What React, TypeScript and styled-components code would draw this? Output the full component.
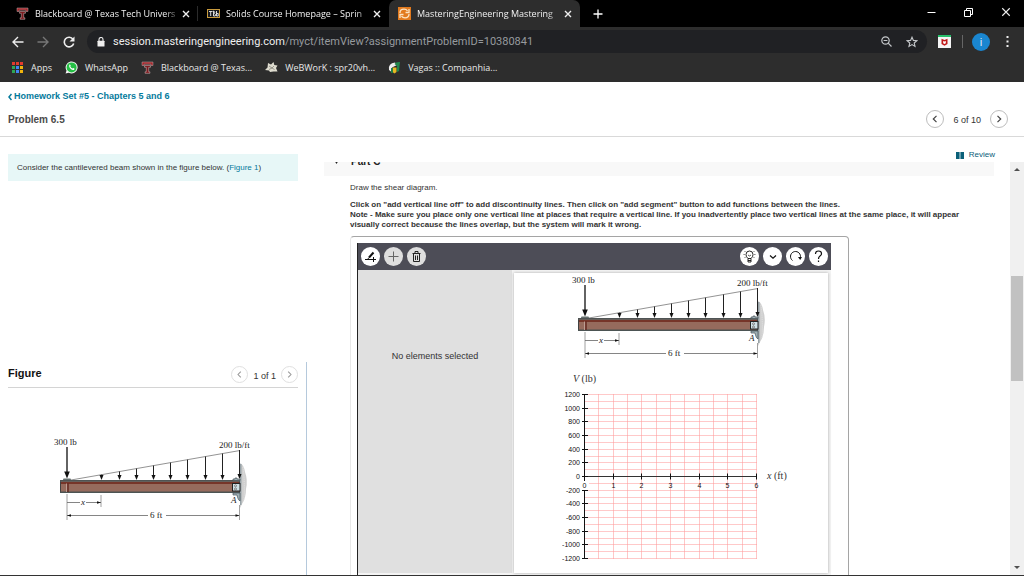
import React from 'react';
import styled, { createGlobalStyle } from 'styled-components';

const GlobalStyle = createGlobalStyle`
  * { box-sizing: border-box; }
  body { margin: 0; background: #fff; font-family: "Liberation Sans", Arial, sans-serif; color: #333; }
  button { font: inherit; color: inherit; background: none; border: 0; padding: 0; margin: 0; display: flex; align-items: center; justify-content: center; }
  a { text-decoration: none; color: inherit; }
  svg { display: block; flex: none; }
  h1, h2, p { margin: 0; }
`;

const uiFont = '"Open Sans", "Noto Sans", sans-serif';
const teal = '#047a9c';

/* ---------- window frame ---------- */
const Window = styled.div`
  height: 100vh;
  display: flex;
  flex-direction: column;
  overflow: hidden;
  border-bottom: 1px solid #333;
`;
const TabStrip = styled.div`
  display: flex;
  height: 27px;
  flex: none;
  background: #000;
  padding-left: 7px;
  font: 9px/27px ${uiFont};
  color: #f1f1f1;
`;
const Tab = styled.div<{ $active?: boolean }>`
  flex: 0 1 191px;
  min-width: 0;
  display: flex;
  align-items: center;
  gap: 6px;
  padding: 0 8px 0 9px;
  border-radius: 7px 7px 0 0;
  background: ${(p) => (p.$active ? '#2d2d2d' : 'transparent')};
`;
const TabTitle = styled.span`
  flex: 1;
  min-width: 0;
  white-space: nowrap;
  mask-image: linear-gradient(to right, #000 92%, rgba(0, 0, 0, 0.3));
`;
const TabDivider = styled.span`
  width: 1px;
  height: 15px;
  margin: 6px 0 0 -1px;
  background: #2b2b2b;
`;
const NewTab = styled.button`
  width: 36px;
`;
const WindowButtons = styled.div`
  margin-left: auto;
  display: flex;
  height: 24px;
`;
const WindowButton = styled.button`
  width: 37px;
`;
const Toolbar = styled.div`
  display: flex;
  align-items: center;
  height: 29px;
  flex: none;
  background: #2d2d2d;
  padding-left: 5px;
`;
const ToolButton = styled.button<{ $width: number }>`
  width: ${(p) => p.$width}px;
  height: 23px;
  flex: none;
`;
const AddressBar = styled.div`
  flex: 1;
  min-width: 0;
  display: flex;
  align-items: center;
  height: 23px;
  margin-left: 5px;
  padding: 0 2px 0 10px;
  border-radius: 12px;
  background: #202124;
  color: #969a9e;
  font: 11px/23px Roboto, ${uiFont};
`;
const Url = styled.span`
  flex: 1;
  min-width: 0;
  margin-left: 8px;
  white-space: nowrap;
  overflow: hidden;
`;
const Host = styled.span`
  color: #eeeeee;
`;
const ToolDivider = styled.span`
  width: 1px;
  height: 13px;
  margin-right: 9px;
  background: #666;
`;
const Avatar = styled.button`
  width: 18px;
  height: 18px;
  flex: none;
  border-radius: 50%;
  background: #1a86d0;
  color: #fff;
  font: 10px/18px ${uiFont};
`;
const Bookmarks = styled.nav`
  display: flex;
  align-items: center;
  gap: 13px;
  height: 26px;
  flex: none;
  padding: 0 12px 3px;
  background: #2d2d2d;
  font: 9px/22px ${uiFont};
  color: #e8e8e8;
`;
const Bookmark = styled.a`
  display: flex;
  align-items: center;
  gap: 7px;
  white-space: nowrap;
`;

/* ---------- assignment page ---------- */
const Header = styled.header`
  display: flex;
  justify-content: space-between;
  align-items: flex-end;
  flex: none;
  padding: 8px 16px 7px 8px;
  border-bottom: 1px solid #d9d9d9;
`;
const BackLink = styled.a`
  display: flex;
  align-items: center;
  gap: 2px;
  color: ${teal};
  font-weight: bold;
  font-size: 9px;
  line-height: 13px;
`;
const ProblemTitle = styled.h1`
  margin: 9px 0 2px;
  font-size: 10px;
  line-height: 15px;
  color: #4a4a4a;
`;
const Pager = styled.div<{ $muted?: boolean }>`
  display: flex;
  align-items: center;
  gap: ${(p) => (p.$muted ? 5 : 9)}px;
  font-size: 9px;
  line-height: 18px;
  color: #333;
  span { padding-top: 2px; }
  button {
    width: ${(p) => (p.$muted ? 17 : 18)}px;
    height: ${(p) => (p.$muted ? 17 : 18)}px;
    border: 1px solid ${(p) => (p.$muted ? '#e0e0e0' : '#bdbdbd')};
    border-radius: 50%;
    color: ${(p) => (p.$muted ? '#999' : '#444')};
  }
`;
const Body = styled.div`
  flex: 1;
  min-height: 0;
  display: grid;
  grid-template-columns: 307px minmax(0, 1fr);
`;
const Side = styled.aside`
  display: flex;
  flex-direction: column;
  justify-content: space-between;
  min-height: 0;
`;
const Prompt = styled.p`
  margin: 17px 9px 0 8px;
  padding: 7px 9px;
  background: #e7f7f7;
  font-size: 8px;
  line-height: 13px;
  white-space: nowrap;
  a { color: ${teal}; }
`;
const FigurePane = styled.section`
  border-right: 1px solid #b5c9dc;
  padding: 0 8px 50px;
`;
const FigureHead = styled.div`
  display: flex;
  justify-content: space-between;
  align-items: center;
  height: 26px;
  border-bottom: 1px solid #d4d4d4;
  h2 { font-size: 11px; line-height: 16px; color: #111; padding-bottom: 3px; }
`;
const FigureArt = styled.div`
  padding: 47px 0 0 42px;
`;
const Main = styled.main`
  display: flex;
  flex-direction: column;
  min-height: 0;
`;
const ReviewRow = styled.div`
  display: flex;
  justify-content: flex-end;
  flex: none;
  padding: 12px 29px 0 0;
  height: 25px;
`;
const ReviewLink = styled.a`
  display: flex;
  align-items: center;
  gap: 5px;
  height: 12px;
  color: #0b6079;
  font-size: 8px;
  line-height: 12px;
`;
const Scroller = styled.div`
  flex: 1;
  min-height: 0;
  display: flex;
`;
const ScrollContent = styled.div`
  flex: 1;
  min-width: 0;
  overflow: hidden;
  padding: 0 16px 0 17px;
`;
const ScrollTrack = styled.div`
  width: 14px;
  flex: none;
  display: flex;
  flex-direction: column;
  background: #f0f0f0;
`;
const ScrollThumb = styled.div`
  height: 105px;
  margin: 99px 1px auto 1px;
  background: #c1c1c1;
`;
const ScrollButton = styled.button`
  height: 15px;
  flex: none;
`;
const PartBar = styled.div`
  display: flex;
  align-items: center;
  gap: 12px;
  height: 28px;
  margin-top: -14px;
  padding-left: 10px;
  background: #f8f8f8;
  h2 { font-size: 10px; line-height: 28px; color: #222; }
`;
const PartContent = styled.div`
  padding: 7px 0 0 26px;
`;
const Instruction = styled.p`
  font-size: 8px;
  line-height: 10px;
`;
const Note = styled.p`
  margin-top: 7px;
  padding-right: 8px;
  font-weight: bold;
  font-size: 8px;
  line-height: 10px;
`;
const Applet = styled.div`
  width: 499px;
  max-width: 100%;
  margin-top: 6px;
  padding: 6px 17px 17px 6px;
  border: 1px solid #a5a5a5;
  border-left-color: #e8e8e8;
  border-radius: 4px;
`;
const AppletFrame = styled.div`
  padding-bottom: 6px;
  border-left: 1px solid #222;
  background: #f4f4f4;
`;
const AppletBar = styled.div`
  display: flex;
  justify-content: space-between;
  padding: 4px 3px;
  background: #4d4d57;
`;
const ButtonGroup = styled.div`
  display: flex;
  gap: 4px;
`;
const RoundButton = styled.button<{ $dim?: boolean }>`
  width: 19px;
  height: 19px;
  border-radius: 50%;
  background: ${(p) => (p.$dim ? '#dedede' : '#fff')};
  color: #111;
`;
const AppletBody = styled.div`
  display: grid;
  grid-template-columns: 154px minmax(0, 1fr);
  column-gap: 2px;
`;
const Inspector = styled.div`
  background: #e0e0e0;
  padding-top: 80px;
  text-align: center;
  font-size: 9px;
  line-height: 12px;
`;
const Canvas = styled.div`
  margin: 3px 3px 0 0;
  padding: 0 0 10px 48px;
  background: #fff;
  box-shadow: 0 0 3px #aaa;
`;
const CanvasFigure = styled.div`
  padding-left: 6px;
`;

/* ---------- drawings ---------- */
const Chevron = ({ dir, size = 8 }: { dir: 'left' | 'right' | 'down'; size?: number }) => (
  <svg width={size} height={size} viewBox="0 0 8 8" fill="none" stroke="currentColor" strokeWidth="1.2">
    <path d={{ left: 'M5.5 .8 2.3 4l3.2 3.2', right: 'M2.5 .8 5.7 4 2.5 7.2', down: 'M1 2.5 4 5.3l3-2.8' }[dir]} />
  </svg>
);

const Cross = ({ size = 8, weight = 1.4 }: { size?: number; weight?: number }) => (
  <svg width={size} height={size} viewBox="0 0 8 8" stroke="#eee" strokeWidth={weight}>
    <path d="M1 1l6 6M7 1 1 7" />
  </svg>
);

const TechLogo = () => (
  <svg width="13" height="13" viewBox="0 0 13 13">
    <path d="M1 1h11v3.500h-2V3.200H3v1.300H1z" fill="#a3262b" stroke="#b9a9a9" strokeWidth=".5" />
    <path d="M3.500 4.500h6v1.800H7.700v4.500h1.200v1.500H4.100v-1.500h1.200V6.300H3.500z" fill="#7d1a1e" stroke="#d8c4c4" strokeWidth=".5" />
  </svg>
);

const CourseLogo = () => (
  <svg width="13" height="13" viewBox="0 0 13 13">
    <rect x=".5" y="2.500" width="12" height="8" fill="#15181e" stroke="#c99b3d" />
    <path d="M2 4.500h3.500M3.700 4.500v4.500M6.500 4v5h1.700q1.200-1.200-.8-2.500 1.500-1.200-.9-2.500M9.500 4v5M9.500 6.500h1.700v2.500H9.500" stroke="#eee" strokeWidth=".9" fill="none" />
  </svg>
);

const MasteringLogo = () => (
  <svg width="13" height="13" viewBox="0 0 13 13">
    <rect width="13" height="13" fill="#e27a1e" />
    <path d="M2 6q0-3.800 4-3.800 2.300 0 3.500 1.600M11 2v3.500H7.500M11 7q0 3.800-4 3.800-2.300 0-3.500-1.600M2 11V7.500h3.500" fill="none" stroke="#fbe3c4" strokeWidth="1.3" />
  </svg>
);

const AppsIcon = () => (
  <svg width="12" height="12" viewBox="0 0 12 12">
    {['#e33b2e', '#e33b2e', '#e33b2e', '#2fa653', '#4285f4', '#f2b50c', '#2fa653', '#4285f4', '#f2b50c'].map((c, i) => (
      <rect key={i} x={(i % 3) * 4} y={Math.floor(i / 3) * 4} width="3" height="3" fill={c} />
    ))}
  </svg>
);

const WhatsAppIcon = () => (
  <svg width="13" height="13" viewBox="0 0 13 13">
    <path d="M.6 12.500 1.500 9.500A6 6 0 1 1 3.800 11.700z" fill="#f4f4f4" />
    <circle cx="6.600" cy="6.400" r="5" fill="#25c045" />
    <path d="M4.200 3.800q1-1 1.500.9l-.4.8q.7 1.500 2.200 2.100l.8-.6q2 .5 1 1.500-1.200 1.200-3.500-.4T4.200 3.800z" fill="#fff" />
  </svg>
);

const WebworkIcon = () => (
  <svg width="13" height="13" viewBox="0 0 13 13">
    <path d="M3 2l3 1.500L8.500 1l.8 3 3.200.5-1.500 2.500 1.500 3.500H8.500L5 11 4 9.500 0 9l2.500-2.500z" fill="#dedccf" />
    <path d="M4 5l3 2 2-2M4 8.500l3-1.500 2.500 1.500" fill="none" stroke="#77766b" strokeWidth=".7" />
  </svg>
);

const VagasIcon = () => (
  <svg width="13" height="13" viewBox="0 0 13 13">
    <path d="M1 9Q0 2 7 1.500L9 4 4 6.500 3.500 11z" fill="#eee" />
    <path d="M6.500 3Q8 .5 12 1l-.5 4L11 10l-2 1V5z" fill="#21864a" />
    <path d="M4.500 6.500h4V11l-2 1.500-2-1.500z" fill="#e6b822" />
    <path d="M3 7h1.800v5H3z" fill="#198147" />
  </svg>
);

const ShieldIcon = () => (
  <svg width="13" height="13" viewBox="0 0 13 13">
    <rect width="13" height="13" fill="#f5f5f5" />
    <rect width="13" height="2" fill="#27c06a" />
    <path d="M3.500 3.700l3 1.300 3-1.300v5.300l-3 1.800-3-1.800z" fill="#c01818" />
    <path d="M5.200 6l1.300.6 1.300-.6v2.200l-1.300.7-1.300-.7z" fill="#fff" />
  </svg>
);

const loadArrow = (x: number, y1: number, y2: number, w = 2) => (
  <g key={x}>
    <path d={`M${x} ${y1}V${y2 - 3}`} stroke="#222" strokeWidth={w > 2 ? 1.4 : 1} />
    <path d={`M${x - w} ${y2 - w * 2.3}h${w * 2}L${x} ${y2 + 0.5}z`} fill="#111" />
  </g>
);

const BeamText = styled.text<{ $italic?: boolean }>`
  font: 9px "Liberation Serif", "Times New Roman", serif;
  font-style: ${(p) => (p.$italic ? 'italic' : 'normal')};
  fill: #222;
`;

const loadXs = [51.5, 69.5, 86.5, 103.5, 120.5, 137.5, 155.5, 172.5];

const BeamDrawing = () => (
  <svg width="205" height="90" viewBox="0 0 205 90">
    <path d="M190 28q4 2 5 9 3 8 1 17 0 9-4 15l-2 4z" fill="#cfcfcf" />
    <path d="M193 32q2 14 1 34" stroke="#e6e6e6" strokeWidth="1" strokeDasharray="1 1" fill="none" />
    <rect x="190" y="29" width="1.500" height="41" fill="#98a3a8" />
    <BeamText x="4" y="10">300 lb</BeamText>
    <BeamText x="169" y="13">200 lb/ft</BeamText>
    {loadArrow(17, 12, 43, 2.8)}
    <path d="M21 45 190 15.500" stroke="#777" strokeWidth=".8" />
    {loadXs.map((x) => loadArrow(x, 45 - (x - 21) * 0.1745, 44.5))}
    {loadArrow(189.5, 15, 43.5)}
    <rect x="13" y="43.500" width="8" height="2" rx="1" fill="#66706f" />
    <rect x="10.500" y="45.500" width="179" height="12" fill="#966b5d" stroke="#414141" />
    <path d="M10 46h180" stroke="#555b5b" strokeWidth="1.500" />
    <path d="M11 48h178" stroke="#6b2318" strokeWidth="1.400" />
    <path d="M10 57.300h180" stroke="#4c5453" strokeWidth="1.400" />
    <path d="M16.500 48.500v8.500" stroke="#c7aaa0" strokeWidth=".8" />
    <path d="M18 48.500v8.500" stroke="#5e2018" strokeWidth="1.300" />
    <rect x="182.500" y="48.500" width="7.500" height="7.500" fill="#cfe0e6" stroke="#222" />
    <circle cx="185.500" cy="50.800" r="1" fill="#eee" stroke="#444" strokeWidth=".6" />
    <circle cx="185.500" cy="54" r="1" fill="#eee" stroke="#444" strokeWidth=".6" />
    <path d="M183 45.500v-1.500h2v-1h2v1h3v1.500zM183 58h7v8q-2-1-2.500-4l-.5-2h-4z" fill="#9fb0b5" stroke="#47545a" strokeWidth=".7" />
    <BeamText x="181" y="68" $italic>A</BeamText>
    <path d="M17 59v26M51 60v12M189.500 70v15" stroke="#888" strokeWidth=".8" />
    <path d="M17 67.500h13M36 67.500h15M17 80.500h81M116 80.500h73" stroke="#666" strokeWidth=".8" />
    <path d="M51 67.500l-4-1.300v2.600zM17 80.500l4-1.300v2.600zM189.500 80.500l-4-1.300v2.600z" fill="#111" />
    <BeamText x="31" y="70" $italic>x</BeamText>
    <BeamText x="100" y="83">6 ft</BeamText>
  </svg>
);

const ChartWrap = styled.svg`
  margin-top: 10px;
`;
const TickText = styled.text`
  font: 7px "Liberation Sans", Arial, sans-serif;
  fill: #111;
`;
const AxisText = styled.text`
  font: 10px "Liberation Serif", "Times New Roman", serif;
  fill: #333;
`;

const yTicks = [1200, 1000, 800, 600, 400, 200, 0, -200, -400, -600, -800, -1000, -1200];
const yAt = (v: number) => Math.round(103 - (v / 1200) * 82) + 0.5;
const xAt = (v: number) => Math.round(22 + (v / 6) * 172) + 0.5;

const ShearChart = () => (
  <ChartWrap width="240" height="190" viewBox="0 0 240 190">
    <AxisText x="11" y="9"><tspan fontStyle="italic">V</tspan> (lb)</AxisText>
    {Array.from({ length: 25 }, (_, i) => (
      <path key={i} d={`M22 ${yAt(1200 - i * 100)}H195`} stroke="#ffc9c9" />
    ))}
    {Array.from({ length: 12 }, (_, i) => (
      <path key={i} d={`M${xAt((i + 1) / 2)} 21V186`} stroke="#f99" strokeOpacity=".55" />
    ))}
    <path d="M22.500 21V186" stroke="#111" />
    <path d={`M22 ${yAt(0)}H195`} stroke="#333" />
    {yTicks.map((v) => (
      <g key={v}>
        <path d={`M20 ${yAt(v)}h6`} stroke="#111" />
        <TickText x="18" y={yAt(v) + 2.5} textAnchor="end">{v}</TickText>
      </g>
    ))}
    <rect x="19" y="108" width="8" height="9" fill="#fff" />
    {[0, 1, 2, 3, 4, 5, 6].map((v) => (
      <g key={v}>
        <path d={`M${xAt(v)} ${yAt(0) - 3}v6`} stroke="#111" />
        <TickText x={xAt(v)} y="115" textAnchor="middle">{v}</TickText>
      </g>
    ))}
    <AxisText x="205" y="106"><tspan fontStyle="italic">x</tspan> (ft)</AxisText>
  </ChartWrap>
);

export default function App() {
  return (
    <Window>
      <GlobalStyle />
      <TabStrip>
        <Tab>
          <TechLogo />
          <TabTitle>Blackboard @ Texas Tech Univers</TabTitle>
          <button aria-label="Close tab"><Cross /></button>
        </Tab>
        <TabDivider />
        <Tab>
          <CourseLogo />
          <TabTitle>Solids Course Homepage – Sprin</TabTitle>
          <button aria-label="Close tab"><Cross /></button>
        </Tab>
        <Tab $active>
          <MasteringLogo />
          <TabTitle>MasteringEngineering Mastering</TabTitle>
          <button aria-label="Close tab"><Cross /></button>
        </Tab>
        <NewTab aria-label="New tab">
          <svg width="10" height="10" viewBox="0 0 10 10" stroke="#fff" strokeWidth="1.300"><path d="M5 .5v9M.5 5h9" /></svg>
        </NewTab>
        <WindowButtons>
          <WindowButton aria-label="Minimize">
            <svg width="9" height="9" viewBox="0 0 9 9" stroke="#fff"><path d="M.5 4.500h8" /></svg>
          </WindowButton>
          <WindowButton aria-label="Restore">
            <svg width="9" height="9" viewBox="0 0 9 9" stroke="#fff" fill="none"><path d="M.5 2.500h6v6h-6zM2.500 2.500v-2h6v6h-2" /></svg>
          </WindowButton>
          <WindowButton aria-label="Close"><Cross size={10} weight={0.9} /></WindowButton>
        </WindowButtons>
      </TabStrip>

      <Toolbar>
        <ToolButton $width={25} aria-label="Back">
          <svg width="12" height="12" viewBox="0 0 12 12" fill="none" stroke="#eee" strokeWidth="1.400"><path d="M11.500 6H1M6 1 1 6l5 5" /></svg>
        </ToolButton>
        <ToolButton $width={26} aria-label="Forward">
          <svg width="12" height="12" viewBox="0 0 12 12" fill="none" stroke="#777" strokeWidth="1.400"><path d="M.5 6H11M6 1l5 5-5 5" /></svg>
        </ToolButton>
        <ToolButton $width={26} aria-label="Reload">
          <svg width="12" height="12" viewBox="0 0 12 12"><path d="M10 3.200A4.800 4.800 0 1 0 10.700 7.500" fill="none" stroke="#eee" strokeWidth="1.600" /><path d="M11.500.5v5h-5z" fill="#eee" /></svg>
        </ToolButton>
        <AddressBar>
          <svg width="8" height="10" viewBox="0 0 8 10"><rect x=".5" y="3.700" width="7" height="5.800" rx=".6" fill="#eee" /><path d="M2 4V2.500a2 2 0 0 1 4 0V4" fill="none" stroke="#eee" strokeWidth="1.100" /></svg>
          <Url><Host>session.masteringengineering.com</Host>/myct/itemView?assignmentProblemID=10380841</Url>
          <ToolButton $width={26} aria-label="Zoom">
            <svg width="11" height="11" viewBox="0 0 11 11" fill="none" stroke="#c4c7ca" strokeWidth="1.200"><circle cx="4.500" cy="4.500" r="3.700" /><path d="M7.200 7.200l3.300 3.300M2.600 4.500h3.800" /></svg>
          </ToolButton>
          <ToolButton $width={26} aria-label="Bookmark this page">
            <svg width="12" height="12" viewBox="0 0 12 12" fill="none" stroke="#c4c7ca" strokeWidth="1.100"><path d="M6 1.200l1.400 3.200 3.500.3-2.700 2.300.8 3.400-3-1.800-3 1.800.8-3.400L1.100 4.700l3.500-.3z" /></svg>
          </ToolButton>
        </AddressBar>
        <ToolButton $width={35} aria-label="Extension"><ShieldIcon /></ToolButton>
        <ToolDivider />
        <Avatar aria-label="Profile">i</Avatar>
        <ToolButton $width={34} aria-label="Menu">
          <svg width="3" height="11" viewBox="0 0 3 11" fill="#eee"><path d="M.5 0h2v2h-2zM.5 4.500h2v2h-2zM.5 9h2v2h-2z" /></svg>
        </ToolButton>
      </Toolbar>

      <Bookmarks>
        <Bookmark href="#"><AppsIcon />Apps</Bookmark>
        <Bookmark href="#"><WhatsAppIcon />WhatsApp</Bookmark>
        <Bookmark href="#"><TechLogo />Blackboard @ Texas...</Bookmark>
        <Bookmark href="#"><WebworkIcon />WeBWorK : spr20vh...</Bookmark>
        <Bookmark href="#"><VagasIcon />Vagas :: Companhia...</Bookmark>
      </Bookmarks>

      <Header>
        <div>
          <BackLink href="#">
            <svg width="4" height="8" viewBox="0 0 4 8" fill="none" stroke="currentColor" strokeWidth="1.500"><path d="M3.500 1 1 4l2.500 3" /></svg>
            Homework Set #5 - Chapters 5 and 6
          </BackLink>
          <ProblemTitle>Problem 6.5</ProblemTitle>
        </div>
        <Pager>
          <button aria-label="Previous problem"><Chevron dir="left" /></button>
          <span>6 of 10</span>
          <button aria-label="Next problem"><Chevron dir="right" /></button>
        </Pager>
      </Header>

      <Body>
        <Side>
          <Prompt>Consider the cantilevered beam shown in the figure below. (<a href="#figure">Figure 1</a>)</Prompt>
          <FigurePane id="figure">
            <FigureHead>
              <h2>Figure</h2>
              <Pager $muted>
                <button aria-label="Previous figure"><Chevron dir="left" size={7} /></button>
                <span>1 of 1</span>
                <button aria-label="Next figure"><Chevron dir="right" size={7} /></button>
              </Pager>
            </FigureHead>
            <FigureArt><BeamDrawing /></FigureArt>
          </FigurePane>
        </Side>

        <Main>
          <ReviewRow>
            <ReviewLink href="#">
              <svg width="8" height="7" viewBox="0 0 8 7" fill="#0b6079"><path d="M0 0h3.600v7H0zM4.400 0H8v7H4.400z" /></svg>
              Review
            </ReviewLink>
          </ReviewRow>
          <Scroller>
            <ScrollContent>
              <PartBar>
                <svg width="5" height="4" viewBox="0 0 5 4" fill="#222"><path d="M0 0h5L2.500 4z" /></svg>
                <h2>Part C</h2>
              </PartBar>
              <PartContent>
                <Instruction>Draw the shear diagram.</Instruction>
                <Note>
                  Click on "add vertical line off" to add discontinuity lines. Then click on "add segment" button to add functions between the lines.
                  <br />
                  Note - Make sure you place only one vertical line at places that require a vertical line. If you inadvertently place two vertical lines at the same place, it will appear visually correct because the lines overlap, but the system will mark it wrong.
                </Note>
                <Applet>
                  <AppletFrame>
                    <AppletBar>
                      <ButtonGroup>
                        <RoundButton aria-label="Add vertical line off">
                          <svg width="13" height="13" viewBox="0 0 13 13" fill="none" stroke="#111"><path d="M1 9.500h6M7 9.500h5M9.500 7v5" /><path d="M5 7.500l4.500-5" strokeWidth="2" /><path d="M3.500 9l2-1.500" /></svg>
                        </RoundButton>
                        <RoundButton $dim aria-label="Add segment">
                          <svg width="11" height="11" viewBox="0 0 11 11" stroke="#666"><path d="M5.500.5v10M.5 5.500h10" /></svg>
                        </RoundButton>
                        <RoundButton $dim aria-label="Delete">
                          <svg width="9" height="11" viewBox="0 0 9 11" fill="none" stroke="#222"><path d="M.5 2.500h8M3 2V.5h3V2M1.500 3v7.500h6V3M3.500 4.500v4.500M5.500 4.500v4.500" /></svg>
                        </RoundButton>
                      </ButtonGroup>
                      <ButtonGroup>
                        <RoundButton aria-label="Hint">
                          <svg width="13" height="13" viewBox="0 0 13 13" fill="none" stroke="#111"><path d="M5 8.500Q3 7 3 4.500a3.500 3.500 0 0 1 7 0Q10 7 8 8.500zM5 8.500v3.500h3V8.500M5 10.500h3" strokeWidth=".9" /><path d="M.5 4.500h1.300M11.200 4.500h1.300M1.500 1l1 1M11.500 1l-1 1M1.500 8l1-1M11.500 8l-1-1" strokeWidth=".6" /><path d="M5 5q1.500 2 3 0" strokeWidth=".7" /></svg>
                        </RoundButton>
                        <RoundButton aria-label="Options"><Chevron dir="down" /></RoundButton>
                        <RoundButton aria-label="Reset">
                          <svg width="13" height="13" viewBox="0 0 13 13" fill="none" stroke="#111"><path d="M3.500 10.500a5 5 0 1 1 8-4V8" /><path d="M9 7h4l-1.800 3z" fill="#111" stroke="none" /></svg>
                        </RoundButton>
                        <RoundButton aria-label="Help">
                          <svg width="9" height="13" viewBox="0 0 9 13" fill="none" stroke="#111" strokeWidth="1.200"><path d="M1.500 4Q1.500 1 4.500 1t3 2.700Q7.500 5 6 6T4.500 9M4.500 10.500V12" /></svg>
                        </RoundButton>
                      </ButtonGroup>
                    </AppletBar>
                    <AppletBody>
                      <Inspector>No elements selected</Inspector>
                      <Canvas>
                        <CanvasFigure><BeamDrawing /></CanvasFigure>
                        <ShearChart />
                      </Canvas>
                    </AppletBody>
                  </AppletFrame>
                </Applet>
              </PartContent>
            </ScrollContent>
            <ScrollTrack>
              <ScrollButton aria-label="Scroll up">
                <svg width="6" height="3" viewBox="0 0 6 3" fill="#505050"><path d="M0 3h6L3 0z" /></svg>
              </ScrollButton>
              <ScrollThumb />
              <ScrollButton aria-label="Scroll down">
                <svg width="6" height="3" viewBox="0 0 6 3" fill="#505050"><path d="M0 0h6L3 3z" /></svg>
              </ScrollButton>
            </ScrollTrack>
          </Scroller>
        </Main>
      </Body>
    </Window>
  );
}
